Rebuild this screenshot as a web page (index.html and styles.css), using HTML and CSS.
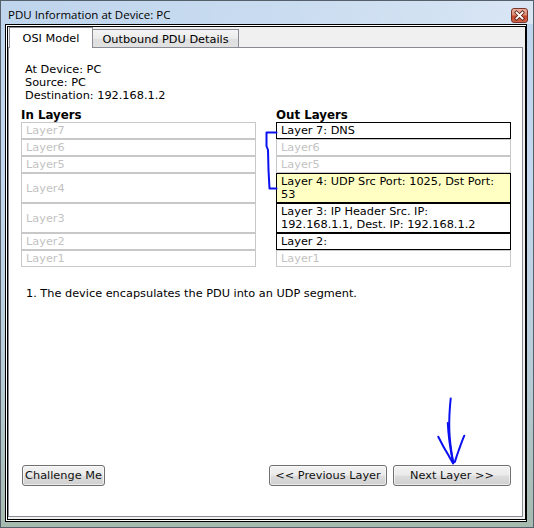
FILE: index.html
```html
<!DOCTYPE html>
<html>
<head>
<meta charset="utf-8">
<title>PDU Information at Device: PC</title>
<link rel="stylesheet" href="styles.css">
</head>
<body>
<div class="window">
  <div class="titlebar">
    <span class="title">PDU Information at Device: PC</span>
    <span class="close">
      <svg width="17" height="15" viewBox="0 0 17 15">
        <path d="M5.5 4.5 L11.5 10.5 M11.5 4.5 L5.5 10.5" stroke="#5a1e14" stroke-width="3.4" stroke-linecap="square" fill="none"/>
        <path d="M5.5 4.5 L11.5 10.5 M11.5 4.5 L5.5 10.5" stroke="#ffffff" stroke-width="1.8" stroke-linecap="square" fill="none"/>
      </svg>
    </span>
  </div>
  <div class="client">
    <div class="client-inner">
      <div class="tabbar">
        <div class="tab tab-active">OSI Model</div>
        <div class="tab tab-idle">Outbound PDU Details</div>
      </div>
      <div class="pane">
        <div class="info">
          <div>At Device: PC</div>
          <div>Source: PC</div>
          <div>Destination: 192.168.1.2</div>
        </div>
        <div class="layers">
          <div class="col">
            <div class="col-title">In Layers</div>
            <div class="stack">
              <div class="box off">Layer7</div>
              <div class="box off">Layer6</div>
              <div class="box off">Layer5</div>
              <div class="box off tall">Layer4</div>
              <div class="box off tall">Layer3</div>
              <div class="box off">Layer2</div>
              <div class="box off">Layer1</div>
            </div>
          </div>
          <div class="col">
            <div class="col-title">Out Layers</div>
            <div class="stack">
              <div class="box on">Layer 7: DNS</div>
              <div class="box off">Layer6</div>
              <div class="box off">Layer5</div>
              <div class="box on current tall2">Layer 4: UDP Src Port: 1025, Dst Port:<br>53</div>
              <div class="box on tall2">Layer 3: IP Header Src. IP:<br>192.168.1.1, Dest. IP: 192.168.1.2</div>
              <div class="box on">Layer 2:</div>
              <div class="box off">Layer1</div>
            </div>
          </div>
        </div>
        <p class="message">1. The device encapsulates the PDU into an UDP segment.</p>
        <div class="buttons">
          <button class="btn btn-challenge">Challenge Me</button>
          <div class="nav">
            <button class="btn btn-nav">&lt;&lt; Previous Layer</button>
            <button class="btn btn-nav">Next Layer &gt;&gt;</button>
          </div>
        </div>
      </div>
    </div>
  </div>
  <svg class="annotations" width="534" height="528" viewBox="0 0 534 528">
    <g stroke="#0a10f0" stroke-width="2" fill="none" stroke-linecap="round" stroke-linejoin="round">
      <path d="M276.5 132.5 L266.5 132.5 L266.5 146 L268 150 L268.5 170 L269.5 188.5 L276.5 188.5"/>
      <path d="M450.7 398.5 C449.5 410 449 420 449.3 430 C449.6 443 451.5 453 453.3 463.3"/>
      <path d="M447.8 423 C448.5 438 450.5 450 452.8 461"/>
      <path d="M438.3 436.7 C441 442 444 448 446 451 C449 456 451 460 453 463.3"/>
      <path d="M464.3 435.7 C462 441 460 447 458.5 451 C457 455 455.8 459 454.8 462"/>
    </g>
  </svg>
</div>
</body>
</html>
```

FILE: styles.css
```css
html, body {
  margin: 0;
  padding: 0;
}
body {
  width: 534px;
  height: 528px;
  overflow: hidden;
  font-family: "DejaVu Sans", Verdana, sans-serif;
  font-size: 11.3px;
  color: #000;
}
.window {
  position: relative;
  box-sizing: border-box;
  width: 534px;
  height: 528px;
  border: 1px solid #55606b;
  padding: 0 6px 5px 4px;
  display: flex;
  flex-direction: column;
  background: linear-gradient(to bottom, #bfd5ed 0px, #c3d8ee 180px, #b7cbd6 380px, #a6b9ae 528px);
}
.titlebar {
  height: 23px;
  flex: none;
  display: flex;
  align-items: center;
  justify-content: space-between;
  margin: 0 -6px 0 -4px;
  padding: 2px 5px 0 7px;
  box-sizing: border-box;
  background: linear-gradient(to right, rgba(255,255,255,0) 0%, rgba(255,255,255,0.15) 50%, rgba(255,255,255,0.4) 100%);
}
.title {
  font-family: "Open Sans", "Noto Sans", sans-serif;
  font-size: 11.5px;
  color: #000;
  padding-top: 1px;
}
.close {
  width: 17px;
  height: 15px;
  box-sizing: border-box;
  border: 1px solid #7a3326;
  border-radius: 3px;
  background: linear-gradient(to bottom, #eab2a3 0%, #dc8a74 45%, #c8462c 55%, #d0634b 100%);
  display: flex;
  align-items: center;
  justify-content: center;
  margin-top: 3px;
}
.close svg {
  display: block;
  margin: -1px;
}
.client {
  flex: 1;
  border: 1px solid #000;
  background: #fff;
  padding: 1px;
  display: flex;
  min-height: 0;
}
.client-inner {
  flex: 1;
  border: 1px solid #000;
  background: #f0f0f0;
  display: flex;
  flex-direction: column;
  min-height: 0;
}
.tabbar {
  height: 20px;
  flex: none;
  display: flex;
  align-items: flex-end;
  padding-left: 1px;
}
.tab {
  box-sizing: border-box;
  display: flex;
  align-items: center;
  justify-content: center;
  border: 1px solid #898c95;
  border-bottom: none;
  color: #000;
}
.tab-active {
  width: 84px;
  height: 21px;
  margin-bottom: -1px;
  background: #fff;
  position: relative;
  z-index: 1;
  padding-top: 1px;
}
.tab-idle {
  width: 146px;
  height: 18px;
  border-left: none;
  background: linear-gradient(to bottom, #f4f4f4 0%, #ebebeb 50%, #dedede 51%, #e2e2e2 100%);
  padding-top: 1px;
}
.pane {
  flex: 1;
  border: 1px solid #898c95;
  background: #fff;
  margin: 0 2px 2px 0;
  padding: 15px 11px 30px 12px;
  display: flex;
  flex-direction: column;
  min-height: 0;
}
.info {
  margin-left: 4px;
  line-height: 13px;
}
.layers {
  margin-top: 7px;
  display: grid;
  grid-template-columns: 235px 235px;
  column-gap: 20px;
}
.col-title {
  font-weight: bold;
  font-size: 11.8px;
  line-height: 13px;
}
.stack {
  display: flex;
  flex-direction: column;
}
.box {
  box-sizing: border-box;
  height: 17px;
  border: 1px solid #c8c8c8;
  padding: 1px 3px 1px 4px;
  line-height: 13px;
  white-space: nowrap;
  overflow: hidden;
}
.box.off {
  color: #c3c3c3;
}
.box.on {
  border-color: #000;
  color: #000;
}
.box.tall {
  height: 30px;
  display: flex;
  align-items: center;
}
.box.tall2 {
  height: 30px;
}
.box.current {
  background: #ffffc4;
}
.message {
  margin: 20px 0 0 5px;
  line-height: 13px;
}
.buttons {
  margin-top: auto;
  display: flex;
  justify-content: space-between;
  align-items: center;
}
.nav {
  display: flex;
  gap: 6px;
}
.btn {
  box-sizing: border-box;
  height: 21px;
  border: 1px solid #707070;
  border-radius: 3px;
  background: linear-gradient(to bottom, #f2f2f2 0%, #ebebeb 48%, #dddddd 52%, #cfcfcf 100%);
  box-shadow: inset 0 0 0 1px rgba(255,255,255,0.6);
  font-family: "DejaVu Sans", Verdana, sans-serif;
  font-size: 11.3px;
  color: #111;
  padding: 0 2px;
  margin: 0;
  line-height: 17px;
}
.btn-challenge {
  width: 83px;
  margin-left: 1px;
}
.btn-nav {
  width: 118px;
}
.annotations {
  position: absolute;
  left: -1px;
  top: -1px;
  pointer-events: none;
}
```
